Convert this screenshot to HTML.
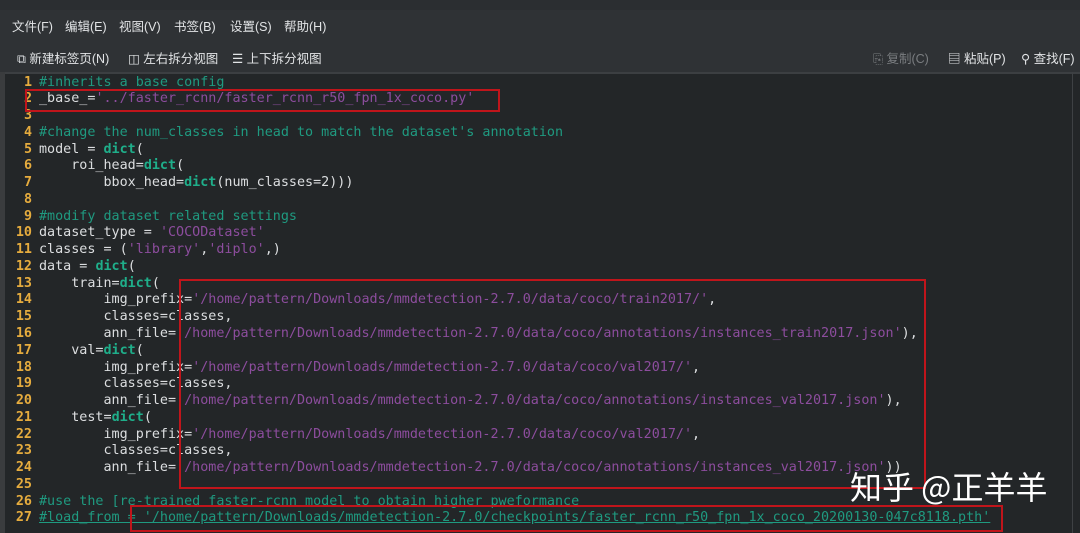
<!DOCTYPE html>
<html><head><meta charset="utf-8"><style>
body{margin:0;width:1080px;height:533px;overflow:hidden;background:#232628;font-family:"Liberation Sans","Noto Sans CJK SC",sans-serif;position:relative}
.title{position:absolute;left:0;top:0;width:1080px;height:10px;background:#2b2e31}
.menu{position:absolute;left:0;top:10px;width:1080px;height:62px;background:#2f3235;border-bottom:2px solid #3c3f42}
.menu span{position:absolute;font-size:12.5px;color:#e2e4e6}
.code{position:absolute;left:0;top:74.5px;font-family:"DejaVu Sans Mono","Liberation Mono",monospace;font-size:13.4px;line-height:16.77px;white-space:pre;color:#dcdee0}
.ln{display:inline-block;width:32px;text-align:right;color:#e6ac3e;margin-right:7px;font-weight:bold}
.c{color:#1f9a80}.s{color:#8d4d9e}.d{color:#1fae8a;font-weight:bold}
.box{position:absolute;border:2px solid #c0151b}
.left{position:absolute;left:0;top:72px;width:5px;height:461px;background:#3a3c3e}
</style></head><body>
<div class="title"></div>
<div class="menu">
<span style="left:12px;top:6px">文件(F)</span><span style="left:65px;top:6px">编辑(E)</span><span style="left:119px;top:6px">视图(V)</span><span style="left:174px;top:6px">书签(B)</span><span style="left:230px;top:6px">设置(S)</span><span style="left:284px;top:6px">帮助(H)</span>
<span style="left:17px;top:38px">⧉ 新建标签页(N)</span><span style="left:128px;top:38px">◫ 左右拆分视图</span><span style="left:232px;top:38px">☰ 上下拆分视图</span>
<span style="left:873px;top:38px;color:#7a7d80">⎘ 复制(C)</span><span style="left:948px;top:38px">▤ 粘贴(P)</span><span style="left:1021px;top:38px">⚲ 查找(F)</span>
</div>
<div class="left"></div>
<div style="position:absolute;left:1072px;top:72px;width:1px;height:461px;background:#3e4144"></div>
<div class="code"><span class="ln">1</span><span class="c">#inherits a base config</span>
<span class="ln">2</span>_base_=<span class="s">'../faster_rcnn/faster_rcnn_r50_fpn_1x_coco.py'</span>
<span class="ln">3</span>
<span class="ln">4</span><span class="c">#change the num_classes in head to match the dataset's annotation</span>
<span class="ln">5</span>model = <span class="d">dict</span>(
<span class="ln">6</span>    roi_head=<span class="d">dict</span>(
<span class="ln">7</span>        bbox_head=<span class="d">dict</span>(num_classes=2)))
<span class="ln">8</span>
<span class="ln">9</span><span class="c">#modify dataset related settings</span>
<span class="ln">10</span>dataset_type = <span class="s">'COCODataset'</span>
<span class="ln">11</span>classes = (<span class="s">'library'</span>,<span class="s">'diplo'</span>,)
<span class="ln">12</span>data = <span class="d">dict</span>(
<span class="ln">13</span>    train=<span class="d">dict</span>(
<span class="ln">14</span>        img_prefix=<span class="s">'/home/pattern/Downloads/mmdetection-2.7.0/data/coco/train2017/'</span>,
<span class="ln">15</span>        classes=classes,
<span class="ln">16</span>        ann_file=<span class="s">'/home/pattern/Downloads/mmdetection-2.7.0/data/coco/annotations/instances_train2017.json'</span>),
<span class="ln">17</span>    val=<span class="d">dict</span>(
<span class="ln">18</span>        img_prefix=<span class="s">'/home/pattern/Downloads/mmdetection-2.7.0/data/coco/val2017/'</span>,
<span class="ln">19</span>        classes=classes,
<span class="ln">20</span>        ann_file=<span class="s">'/home/pattern/Downloads/mmdetection-2.7.0/data/coco/annotations/instances_val2017.json'</span>),
<span class="ln">21</span>    test=<span class="d">dict</span>(
<span class="ln">22</span>        img_prefix=<span class="s">'/home/pattern/Downloads/mmdetection-2.7.0/data/coco/val2017/'</span>,
<span class="ln">23</span>        classes=classes,
<span class="ln">24</span>        ann_file=<span class="s">'/home/pattern/Downloads/mmdetection-2.7.0/data/coco/annotations/instances_val2017.json'</span>))
<span class="ln">25</span>
<span class="ln">26</span><span class="c">#use the [re-trained faster-rcnn model to obtain higher pweformance</span>
<span class="ln">27</span><span class="c" style="text-decoration:underline">#load_from = '/home/pattern/Downloads/mmdetection-2.7.0/checkpoints/faster_rcnn_r50_fpn_1x_coco_20200130-047c8118.pth'</span></div>
<div class="box" style="left:25px;top:89px;width:471px;height:19px"></div>
<div class="box" style="left:179px;top:279px;width:743px;height:206px"></div>
<div class="box" style="left:130px;top:505px;width:869px;height:23px"></div>
<div style="position:absolute;left:850px;top:466px;font-size:32px;color:#fff;font-family:'Noto Sans CJK SC',sans-serif;line-height:40px">知乎 @正羊羊</div>
</body></html>
